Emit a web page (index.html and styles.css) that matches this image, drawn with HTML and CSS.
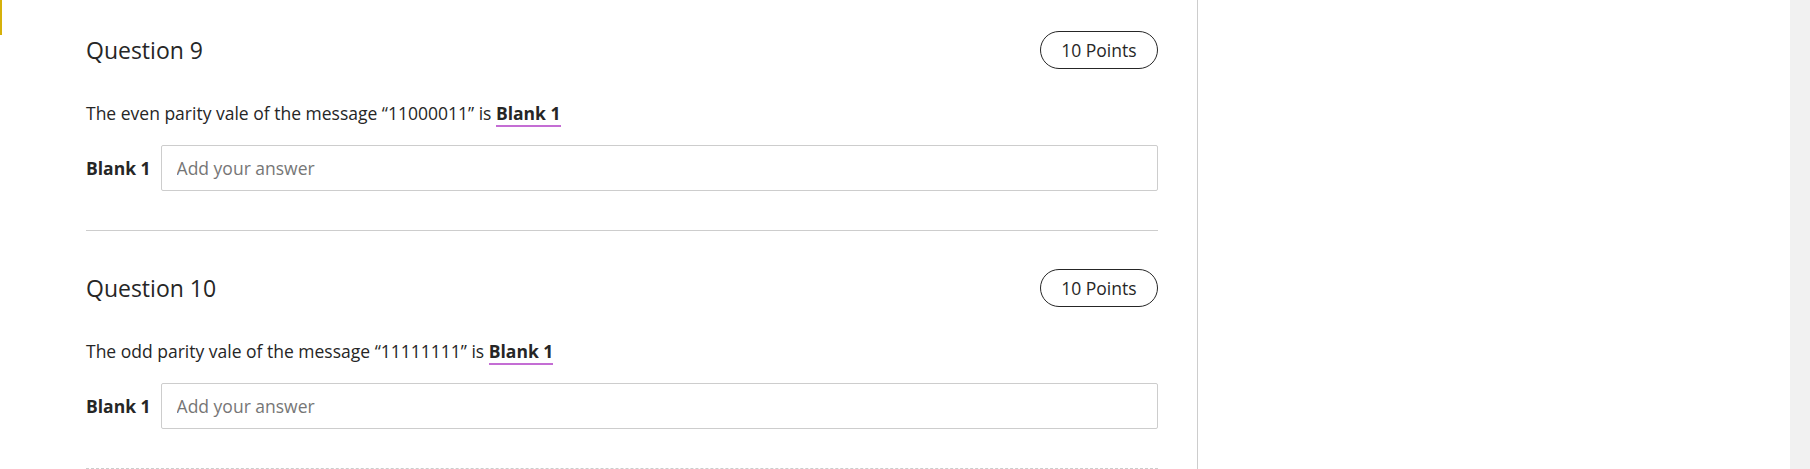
FILE: index.html
```html
<!DOCTYPE html>
<html lang="en">
<head>
    <meta charset="UTF-8">
    <meta name="viewport" content="width=device-width, initial-scale=1.0">
    <title>Test</title>
    <link rel="stylesheet" href="styles.css">
</head>
<body>
    <div class="page">
        <div class="main">
            <div class="question-list">

                <!-- Question 9 -->
                <div class="question">
                    <div class="question-header">
                        <h2 class="question-title">Question 9</h2>
                        <span class="points">10 Points</span>
                    </div>
                    <p class="question-text">The even parity vale of the message “11000011” is <span class="blank-ref">Blank 1</span></p>
                    <div class="blank-row">
                        <label class="blank-label" for="q9b1">Blank 1</label>
                        <input type="text" id="q9b1" class="blank-input" placeholder="Add your answer">
                    </div>
                </div>

                <!-- Question 10 -->
                <div class="question">
                    <div class="question-header">
                        <h2 class="question-title">Question 10</h2>
                        <span class="points">10 Points</span>
                    </div>
                    <p class="question-text">The odd parity vale of the message “11111111” is <span class="blank-ref">Blank 1</span></p>
                    <div class="blank-row">
                        <label class="blank-label" for="q10b1">Blank 1</label>
                        <input type="text" id="q10b1" class="blank-input" placeholder="Add your answer">
                    </div>
                </div>

            </div>
        </div>
        <div class="side"></div>
        <div class="scroll-track"></div>
    </div>
</body>
</html>
```

FILE: styles.css
```css
/* Assessment page */
body {
    margin: 0;
    font-family: "Open Sans", Arial, sans-serif;
    color: #262626;
    background: #fff;
}

.page {
    display: flex;
    height: 469px;
    overflow: hidden;
}

.main {
    position: relative;
    flex: none;
    width: 1197px;
    border-right: 1px solid #cdcdcd;
}

/* focus marker in the top left corner */
.main::before {
    content: "";
    position: absolute;
    left: 0;
    top: 0;
    width: 2px;
    height: 35px;
    background: #d6b10a;
}

.question-list {
    padding: 31px 39px 0 86px;
}

.question {
    padding-bottom: 39px;
    border-bottom: 1px solid #cdcdcd;
}

.question + .question {
    padding-top: 38px;
}

.question:last-child {
    border-bottom-style: dashed;
}

.question-header {
    display: flex;
    justify-content: space-between;
    align-items: center;
    height: 38px;
}

.question-title {
    margin: 0;
    font-size: 23px;
    font-weight: 400;
}

.points {
    display: flex;
    align-items: center;
    box-sizing: border-box;
    height: 38px;
    padding: 0 20.5px;
    border: 1px solid #262626;
    border-radius: 19px;
    font-size: 17.5px;
}

.question-text {
    margin: 31px 0 19px;
    font-size: 17.5px;
    line-height: 26px;
}

.blank-ref {
    font-weight: 700;
    border-bottom: 2px solid #c46dd4;
}

.blank-row {
    display: flex;
    align-items: center;
    gap: 10px;
}

.blank-label {
    font-size: 17.5px;
    font-weight: 700;
}

.blank-input {
    flex: 1;
    box-sizing: border-box;
    height: 46px;
    margin: 0;
    padding: 0 15px;
    border: 1px solid #cdcdcd;
    border-radius: 2px;
    font-family: inherit;
    font-size: 17.5px;
    color: #262626;
}

.blank-input::placeholder {
    color: #767676;
}

.side {
    flex: 1;
}

.scroll-track {
    flex: none;
    width: 20px;
    background: #f1f1f1;
}
```
